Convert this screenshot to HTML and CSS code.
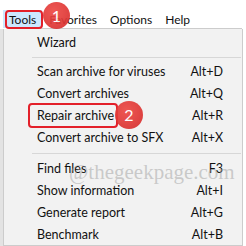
FILE: index.html
```html
<!DOCTYPE html>
<html>
<head>
    <meta charset="UTF-8">
    <title>Tools menu</title>
    <link rel="stylesheet" href="styles.css">
</head>
<body>
    <div class="screen">
        <!-- barra dei menu -->
        <div class="menubar">
            <span class="menu-item active">Tools</span>
            <span class="menu-item">Favorites</span>
            <span class="menu-item">Options</span>
            <span class="menu-item">Help</span>
        </div>

        <div class="window">
            <div class="edge"></div>
            <div class="dropdown">
                <div class="top-rule"></div>
                <div class="item"><span>Wizard</span><span class="key"></span></div>
                <div class="sep"></div>
                <div class="item"><span>Scan archive for viruses</span><span class="key">Alt+D</span></div>
                <div class="item"><span>Convert archives</span><span class="key">Alt+Q</span></div>
                <div class="item"><span>Repair archive</span><span class="key">Alt+R</span></div>
                <div class="item"><span>Convert archive to SFX</span><span class="key">Alt+X</span></div>
                <div class="sep sep-wide"></div>
                <div class="item"><span>Find files</span><span class="key">F3</span></div>
                <div class="item"><span>Show information</span><span class="key">Alt+I</span></div>
                <div class="item"><span>Generate report</span><span class="key">Alt+G</span></div>
                <div class="item"><span>Benchmark</span><span class="key">Alt+B</span></div>
            </div>
        </div>

        <!-- annotazioni -->
        <div class="watermark">@thegeekpage.com</div>
        <div class="mark mark-tools"></div>
        <div class="badge badge-1">1</div>
        <div class="mark mark-repair"></div>
        <div class="badge badge-2">2</div>
    </div>
</body>
</html>
```

FILE: styles.css
```css
body {
    margin: 0;
    background: #ffffff;
    font-family: Lato, "Liberation Sans", sans-serif;
    font-size: 12.5px;
    color: #111111;
}
.screen {
    position: relative;
    width: 246px;
    height: 246px;
    overflow: hidden;
}
.menubar {
    display: flex;
    height: 29px;
    padding: 10px 0 0 3px;
    box-sizing: border-box;
    font-size: 12px;
}
.menu-item {
    height: 18px;
    line-height: 20px;
    padding: 0 6px;
    margin-right: 1px;
}
.menu-item.active {
    background: #cce8ff;
}
.window {
    display: flex;
    height: 217px;
}
.edge {
    width: 3px;
    background: #e3e3e3;
}
.dropdown {
    width: 240px;
    background: #f2f2f2;
    border: 1px solid #cccccc;
    border-top: none;
    padding-top: 3px;
    box-sizing: border-box;
}
.top-rule {
    height: 1px;
    margin: -4px 0 3px 28px;
    background: #cccccc;
}
.item {
    display: flex;
    justify-content: space-between;
    height: 22px;
    line-height: 22px;
    padding: 0 19px 0 33px;
}
.sep {
    height: 1px;
    margin: 3px 1px 3px 28px;
    background: #d7d7d7;
}
.sep-wide {
    margin-top: 4px;
    margin-bottom: 4px;
}
.watermark {
    position: absolute;
    left: 69px;
    top: 160px;
    font-family: "Liberation Serif", serif;
    font-size: 21px;
    color: rgba(160, 160, 160, 0.5);
}
.mark {
    position: absolute;
    border: 2px solid #e3202a;
    border-radius: 4px;
    box-sizing: border-box;
}
.mark-tools {
    left: 5px;
    top: 10px;
    width: 38px;
    height: 19px;
}
.mark-repair {
    left: 28px;
    top: 103px;
    width: 90px;
    height: 25px;
}
.badge {
    position: absolute;
    width: 27px;
    height: 27px;
    border-radius: 50%;
    background: radial-gradient(circle at 40% 35%, #ee4a45, #d42a2a);
    color: #ffffff;
    font-size: 16px;
    line-height: 27px;
    text-align: center;
    opacity: 0.92;
}
.badge-1 {
    left: 43px;
    top: 2px;
}
.badge-2 {
    left: 115px;
    top: 101px;
    width: 28px;
    height: 28px;
    line-height: 28px;
}
```
